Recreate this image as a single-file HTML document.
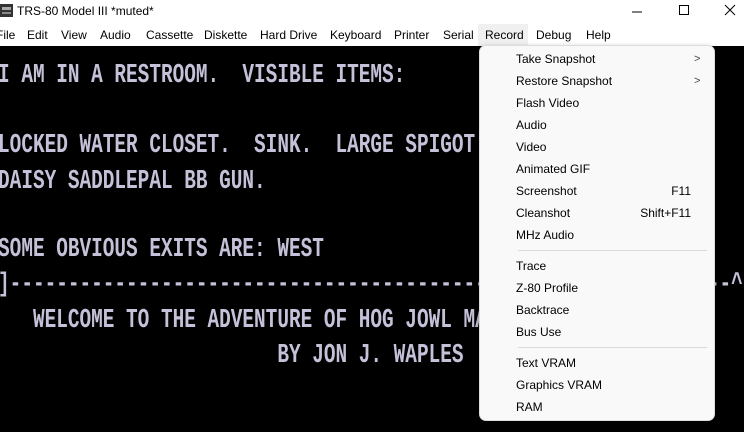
<!DOCTYPE html>
<html><head><style>
*{margin:0;padding:0;box-sizing:border-box}
body{width:744px;height:432px;overflow:hidden;background:#000;position:relative;font-family:"Liberation Sans",sans-serif}
.t{position:absolute;white-space:nowrap}
#title{position:absolute;left:0;top:0;width:744px;height:24px;background:#fff}
#mb{position:absolute;left:0;top:24px;width:744px;height:22px;background:#fff;font-size:12px;color:#000}
#mb span{position:absolute;top:4px}
.scr{position:absolute;font-family:"Liberation Mono",monospace;font-weight:bold;font-size:19.4px;color:#c4c1d8;white-space:pre;transform:scaleY(1.38);transform-origin:0 50%;line-height:20px;letter-spacing:0}
#menu{position:absolute;left:479px;top:45px;width:236px;height:376px;background:#f9f9f9;border:1px solid #ddd;border-radius:7px;box-shadow:0 2px 6px rgba(0,0,0,.3);font-size:12px;color:#000}
#menu .i{position:absolute;left:36px;white-space:nowrap}
#menu .k{position:absolute;right:23px}
#menu .a{position:absolute;left:214px;font-size:11px;color:#444}
.sep{position:absolute;left:38px;width:189px;height:1px;background:#d9d9d9}
</style></head><body>
<div id="title">
<svg class="t" style="left:0;top:4px" width="13" height="13"><rect x="0" y="0" width="13" height="13" fill="#333"/><rect x="2" y="3" width="9" height="3" fill="#aaa"/><rect x="2" y="8" width="9" height="2" fill="#888"/></svg>
<span class="t" style="left:17px;top:4px;font-size:12px">TRS-80 Model III *muted*</span>
<svg class="t" style="left:631px;top:6px" width="12" height="12"><line x1="1" y1="6" x2="11" y2="6" stroke="#000"/></svg>
<svg class="t" style="left:678px;top:4px" width="12" height="12"><rect x="1.5" y="1.5" width="9" height="9" fill="none" stroke="#000"/></svg>
<svg class="t" style="left:724px;top:4px" width="12" height="12"><path d="M1 1L11 11M11 1L1 11" stroke="#000"/></svg>
</div>
<div id="mb">
<span style="left:-4px">File</span><span style="left:27px">Edit</span><span style="left:61px">View</span><span style="left:100px">Audio</span><span style="left:146px">Cassette</span><span style="left:204px">Diskette</span><span style="left:260px">Hard Drive</span><span style="left:330px">Keyboard</span><span style="left:394px">Printer</span><span style="left:443px">Serial</span>
<div style="position:absolute;left:478px;top:0;width:50px;height:22px;background:#f0f0f0"></div>
<span style="left:485px">Record</span><span style="left:536px">Debug</span><span style="left:586px">Help</span>
</div>
<div class="scr" style="left:-13.6px;top:65px"> I AM IN A RESTROOM.  VISIBLE ITEMS:</div>
<div class="scr" style="left:-13.6px;top:135px"> LOCKED WATER CLOSET.  SINK.  LARGE SPIGOT</div>
<div class="scr" style="left:-13.6px;top:171px"> DAISY SADDLEPAL BB GUN.</div>
<div class="scr" style="left:-13.6px;top:239px"> SOME OBVIOUS EXITS ARE: WEST</div>
<div class="scr" style="left:-13.6px;top:274px"> ]--------------------------------------------------------------^</div>
<div class="scr" style="left:-13.6px;top:310px">    WELCOME TO THE ADVENTURE OF HOG JOWL MANOR</div>
<div class="scr" style="left:-13.6px;top:345px">                         BY JON J. WAPLES</div>
<div id="menu">
<span class="i" style="top:6px">Take Snapshot</span><span class="a" style="top:7px">&gt;</span>
<span class="i" style="top:28px">Restore Snapshot</span><span class="a" style="top:29px">&gt;</span>
<span class="i" style="top:50px">Flash Video</span>
<span class="i" style="top:72px">Audio</span>
<span class="i" style="top:94px">Video</span>
<span class="i" style="top:116px">Animated GIF</span>
<span class="i" style="top:138px">Screenshot</span><span class="k" style="top:138px">F11</span>
<span class="i" style="top:160px">Cleanshot</span><span class="k" style="top:160px">Shift+F11</span>
<span class="i" style="top:182px">MHz Audio</span>
<div class="sep" style="top:204px"></div>
<span class="i" style="top:213px">Trace</span>
<span class="i" style="top:235px">Z-80 Profile</span>
<span class="i" style="top:257px">Backtrace</span>
<span class="i" style="top:279px">Bus Use</span>
<div class="sep" style="top:301px"></div>
<span class="i" style="top:310px">Text VRAM</span>
<span class="i" style="top:332px">Graphics VRAM</span>
<span class="i" style="top:354px">RAM</span>
</div>
</body></html>
